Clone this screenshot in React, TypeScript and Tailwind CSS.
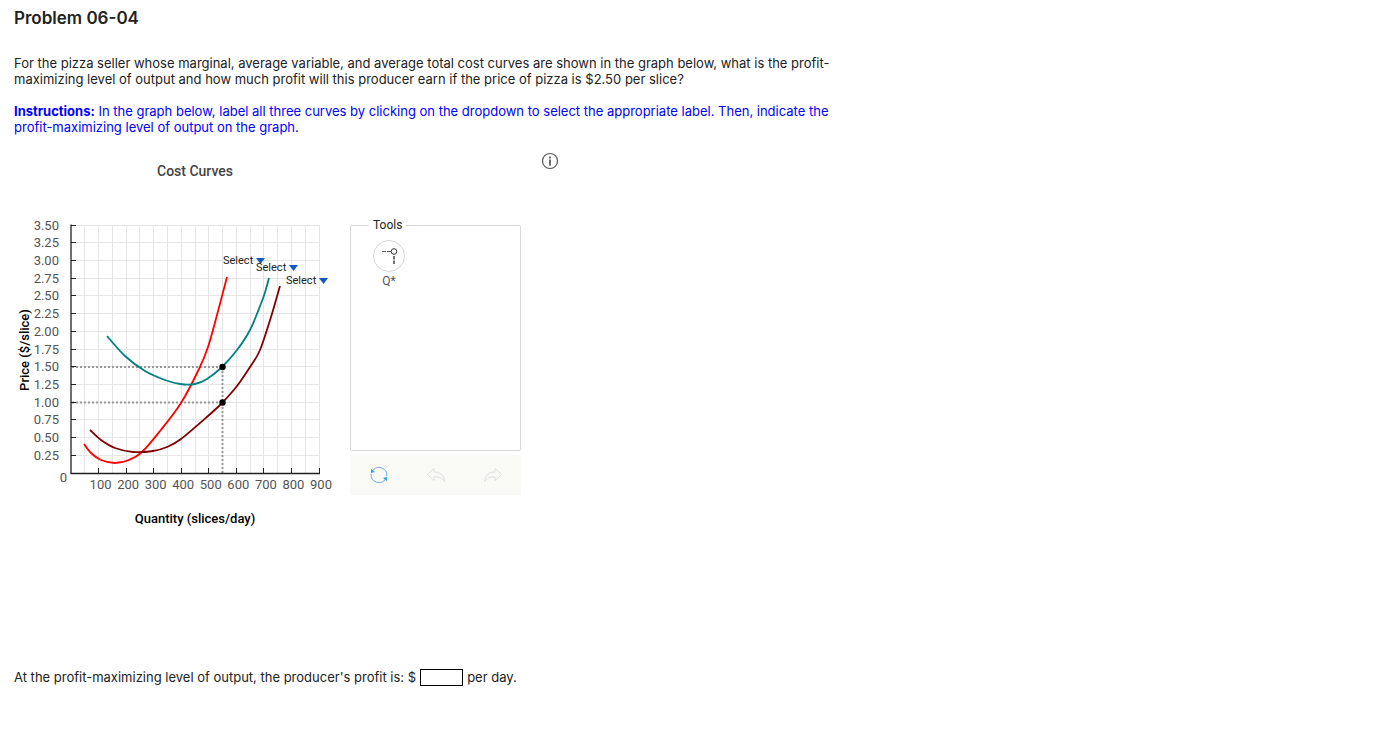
import { useState } from "react";

type Point = [number, number];

interface Curve {
  id: string;
  color: string;
  points: Point[];
  menu: string;
}

const CURVE_LABELS = ["MC", "ATC", "AVC"];

const ORIGIN_X = 71;
const ORIGIN_Y = 473;
const RIGHT = 319;
const TOP = 225;

const prices = Array.from({ length: 14 }, (_, i) => (i + 1) * 0.25);
const quantities = Array.from({ length: 9 }, (_, i) => (i + 1) * 100);

const curves: Curve[] = [
  {
    id: "red",
    color: "#ff0000",
    points: [[84, 444], [91, 453], [101, 460], [115, 463], [129, 460], [142, 452], [160, 431], [181, 403], [199, 369], [208, 347], [217, 315], [227, 277]],
    menu: "left-[209px] top-[37px]",
  },
  {
    id: "teal",
    color: "#008080",
    points: [[107, 336], [125, 356], [145, 371], [165, 380], [180, 384], [195, 384], [207, 379], [222, 367], [237, 350], [250, 330], [262, 301], [266, 289], [269, 278]],
    menu: "left-[242px] top-[44px]",
  },
  {
    id: "maroon",
    color: "#800000",
    points: [[90, 430], [101, 440], [115, 448], [133, 452], [153, 451], [167, 447], [181, 439], [208, 416], [222, 403], [237, 386], [250, 367], [260, 350], [271, 317], [276, 300], [280, 286]],
    menu: "left-[272px] top-[57px]",
  },
];

function xPos(q: number) {
  return ORIGIN_X + (q / 900) * (RIGHT - ORIGIN_X);
}

function yPos(p: number) {
  return ORIGIN_Y - (p / 3.5) * (ORIGIN_Y - TOP);
}

// Catmull-Rom spline through the points
function smoothPath(pts: Point[]) {
  let d = `M${pts[0][0]} ${pts[0][1]}`;
  for (let i = 0; i < pts.length - 1; i++) {
    const a = pts[i - 1] ?? pts[i];
    const b = pts[i];
    const c = pts[i + 1];
    const e = pts[i + 2] ?? c;
    d += ` C${b[0] + (c[0] - a[0]) / 6} ${b[1] + (c[1] - a[1]) / 6} ${c[0] - (e[0] - b[0]) / 6} ${c[1] - (e[1] - b[1]) / 6} ${c[0]} ${c[1]}`;
  }
  return d;
}

function CurveSelect({ curve }: { curve: Curve }) {
  const [value, setValue] = useState("");

  return (
    <div className={`absolute flex items-center ${curve.menu}`}>
      <select
        aria-label={`Label for the ${curve.id} curve`}
        value={value}
        onChange={(e) => setValue(e.target.value)}
        className="h-4 w-11 appearance-none bg-transparent text-[11px] leading-4 text-[#222]"
      >
        <option value="">Select</option>
        {CURVE_LABELS.map((label) => (
          <option key={label}>{label}</option>
        ))}
      </select>
      <svg viewBox="0 0 9 6" className="pointer-events-none absolute right-0.5 h-1.5 w-[9px]">
        <path d="M0 0h9L4.500 6z" fill="#1159c2" />
      </svg>
    </div>
  );
}

function Chart() {
  return (
    <figure className="w-[326px] shrink-0 font-[Roboto,sans-serif]">
      <figcaption className="pr-6 pl-[60px] text-center text-sm leading-[38px] font-medium text-[#444]">
        Cost Curves
      </figcaption>
      <div className="relative mt-[26px]">
        <svg width="326" height="320" viewBox="14 216 326 320">
          <g stroke="#e6e6e6">
            {prices.map((p) => (
              <line key={p} x1={ORIGIN_X} x2={RIGHT + 1} y1={Math.floor(yPos(p)) + 0.5} y2={Math.floor(yPos(p)) + 0.5} />
            ))}
            {Array.from({ length: 18 }, (_, i) => Math.floor(xPos((i + 1) * 50)) + 0.5).map((x) => (
              <line key={x} x1={x} x2={x} y1={TOP} y2={ORIGIN_Y} />
            ))}
          </g>
          <g stroke="#999" strokeWidth="2" strokeDasharray="2 2">
            <path d="M72 367H222M72 402.500H222M222.500 367V473" fill="none" />
          </g>
          <g stroke="#222">
            <path d="M71 224.500V473.500H320" fill="none" strokeWidth="1.300" />
            {prices.map((p) => (
              <line key={p} x1={ORIGIN_X} x2={76} y1={Math.floor(yPos(p)) + 0.5} y2={Math.floor(yPos(p)) + 0.5} />
            ))}
            {quantities.map((q) => (
              <line key={q} x1={Math.floor(xPos(q)) + 0.5} x2={Math.floor(xPos(q)) + 0.5} y1={468} y2={ORIGIN_Y} />
            ))}
          </g>
          {curves.map((c) => (
            <path key={c.id} d={smoothPath(c.points)} fill="none" stroke={c.color} strokeWidth="1.800" />
          ))}
          <circle cx="222.500" cy="367" r="3.200" />
          <circle cx="222.500" cy="402.500" r="3.200" />
          <g fill="#545454" fontSize="13">
            {prices.map((p) => (
              <text key={p} x="59" y={Math.floor(yPos(p)) + 5} textAnchor="end">
                {p.toFixed(2)}
              </text>
            ))}
            <text x="67" y="482" textAnchor="end">0</text>
            {quantities.map((q) => (
              <text key={q} x={xPos(q) + 2} y="489" textAnchor="middle">
                {q}
              </text>
            ))}
          </g>
          <g fill="#000" fontSize="13" fontWeight="500" textAnchor="middle">
            <text x="195" y="523">Quantity (slices/day)</text>
            <text transform="translate(29 350) rotate(-90)">Price ($/slice)</text>
          </g>
        </svg>
        {curves.map((c) => (
          <CurveSelect key={c.id} curve={c} />
        ))}
      </div>
    </figure>
  );
}

function Tools() {
  return (
    <div className="mt-[63px] ml-2.5 w-[171px] shrink-0 font-[Roboto,sans-serif]">
      <fieldset className="h-[236px] rounded-xs border border-[#d8d8d8] px-[18px]">
        <legend className="ml-0 px-1 text-xs leading-5 text-[#222]">Tools</legend>
        <button type="button" className="mt-[5px] ml-1 flex w-8 flex-col items-center gap-px text-xs text-[#555]">
          <svg viewBox="0 0 32 32" className="size-8" fill="none">
            <circle cx="16" cy="16" r="15.500" stroke="#d5d5d5" />
            <path d="M9 11.500h4M14 11.500h4" stroke="#555" />
            <circle cx="21" cy="11.500" r="2.800" stroke="#333" />
            <path d="M21 16v3.500M21 20.500v3.500" stroke="#444" strokeWidth="1.500" />
          </svg>
          <span className="leading-4">Q*</span>
        </button>
      </fieldset>
      <div className="mt-1 grid h-10 grid-cols-3 items-center justify-items-center bg-[#f9f9f5]">
        <button type="button" aria-label="Reset">
          <svg viewBox="0 0 18 18" className="size-[18px]" fill="none">
            <path d="M2.500 5A7.800 7.800 0 0 1 16.800 10M15.500 13A7.800 7.800 0 0 1 1.200 8" stroke="#77a9dc" />
            <path d="M1 3v4l4-1zM17 15v-4l-4 1z" fill="#2ea3e6" />
          </svg>
        </button>
        <button type="button" aria-label="Undo">
          <svg viewBox="0 0 20 16" className="h-4 w-5" fill="none">
            <path d="M8 1.500L1.500 7.500L8 13.500V10C13 9.500 16 11 18.500 14.500C18 8 14 5 8 5Z" stroke="#dedede" />
          </svg>
        </button>
        <button type="button" aria-label="Redo">
          <svg viewBox="0 0 20 16" className="h-4 w-5" fill="none">
            <path d="M12 1.500L18.500 7.500L12 13.500V10C7 9.500 4 11 1.500 14.500C2 8 6 5 12 5Z" stroke="#dedede" />
          </svg>
        </button>
      </div>
    </div>
  );
}

export default function App() {
  const [profit, setProfit] = useState("");

  return (
    <main className="bg-white px-3.5 pt-1.5 pb-12 font-[Inter,sans-serif] text-[13px] leading-4 text-[#222]">
      <h1 className="text-[17px] leading-6 font-semibold">Problem 06-04</h1>
      <div className="mt-[25px] max-w-[850px]">
        <p>
          For the pizza seller whose marginal, average variable, and average total cost curves are shown in the graph
          below, what is the profit-maximizing level of output and how much profit will this producer earn if the price
          of pizza is $2.50 per slice?
        </p>
        <p className="mt-4 text-[#0000ff]">
          <b>Instructions:</b> In the graph below, label all three curves by clicking on the dropdown to select the
          appropriate label. Then, indicate the profit-maximizing level of output on the graph.
        </p>
      </div>

      <div className="mt-[17px] flex items-start">
        <Chart />
        <Tools />
        <button type="button" aria-label="Information" className="ml-5">
          <svg viewBox="0 0 18 18" className="size-[18px]" fill="none">
            <circle cx="9" cy="9" r="7.500" stroke="#555" strokeWidth="1.200" />
            <path d="M9 4.500v2M9 7.500v6" stroke="#444" strokeWidth="1.600" />
          </svg>
        </button>
      </div>

      <div className="mt-[133px] flex h-4 items-center">
        <label htmlFor="profit">At the profit-maximizing level of output, the producer's profit is: $</label>
        <input
          id="profit"
          type="text"
          value={profit}
          onChange={(e) => setProfit(e.target.value)}
          className="mx-1 h-[17px] w-[43px] border border-black px-1"
        />
        <span>per day.</span>
      </div>
    </main>
  );
}
